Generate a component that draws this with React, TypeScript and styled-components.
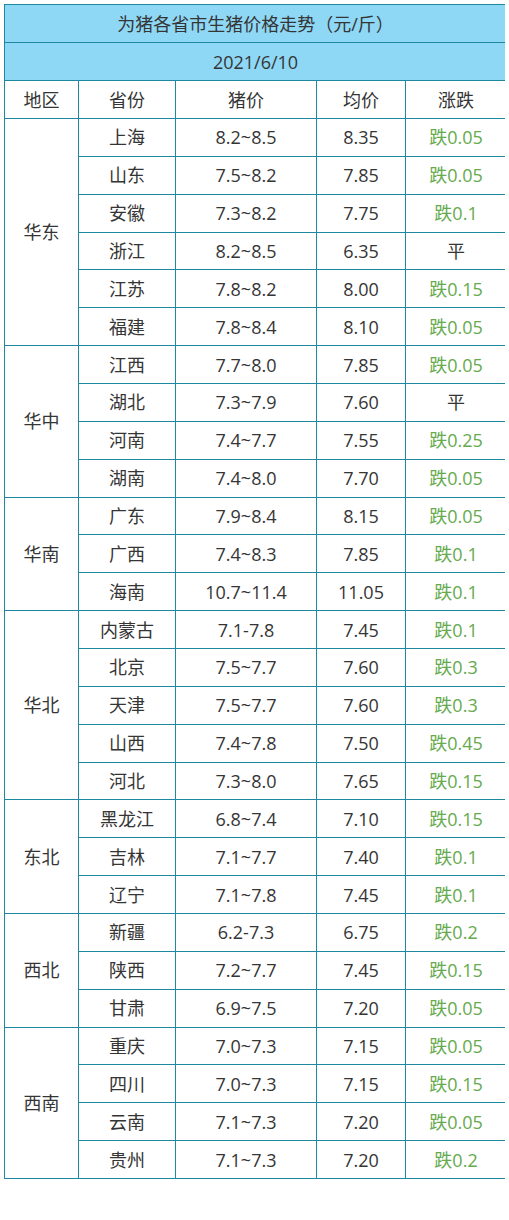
import styled, { createGlobalStyle } from 'styled-components';

const GlobalStyle = createGlobalStyle`
  body {
    margin: 4px;
    background: #ffffff;
    font-family: "Open Sans", "Noto Sans CJK SC", sans-serif;
    color: #333333;
  }
`;

const Table = styled.table`
  width: 502px;
  border-collapse: collapse;
  table-layout: fixed;
  font-size: 18px;
  line-height: 1;
`;

const Cell = styled.td<{ $green?: boolean }>`
  border: 1px solid #1e88a0;
  text-align: center;
  vertical-align: middle;
  padding: 0;
  color: ${(p) => (p.$green ? '#66aa4e' : '#353535')};
`;

const BannerCell = styled(Cell)`
  background: #8ed8f6;
`;

const HeadRow = styled.tr`
  height: 38px;
`;

const Row = styled.tr`
  height: 37.86px;
`;

type Item = [string, string, string, string];

const regions: { name: string; items: Item[] }[] = [
  {
    name: '华东',
    items: [
      ['上海', '8.2~8.5', '8.35', '跌0.05'],
      ['山东', '7.5~8.2', '7.85', '跌0.05'],
      ['安徽', '7.3~8.2', '7.75', '跌0.1'],
      ['浙江', '8.2~8.5', '6.35', '平'],
      ['江苏', '7.8~8.2', '8.00', '跌0.15'],
      ['福建', '7.8~8.4', '8.10', '跌0.05'],
    ],
  },
  {
    name: '华中',
    items: [
      ['江西', '7.7~8.0', '7.85', '跌0.05'],
      ['湖北', '7.3~7.9', '7.60', '平'],
      ['河南', '7.4~7.7', '7.55', '跌0.25'],
      ['湖南', '7.4~8.0', '7.70', '跌0.05'],
    ],
  },
  {
    name: '华南',
    items: [
      ['广东', '7.9~8.4', '8.15', '跌0.05'],
      ['广西', '7.4~8.3', '7.85', '跌0.1'],
      ['海南', '10.7~11.4', '11.05', '跌0.1'],
    ],
  },
  {
    name: '华北',
    items: [
      ['内蒙古', '7.1-7.8', '7.45', '跌0.1'],
      ['北京', '7.5~7.7', '7.60', '跌0.3'],
      ['天津', '7.5~7.7', '7.60', '跌0.3'],
      ['山西', '7.4~7.8', '7.50', '跌0.45'],
      ['河北', '7.3~8.0', '7.65', '跌0.15'],
    ],
  },
  {
    name: '东北',
    items: [
      ['黑龙江', '6.8~7.4', '7.10', '跌0.15'],
      ['吉林', '7.1~7.7', '7.40', '跌0.1'],
      ['辽宁', '7.1~7.8', '7.45', '跌0.1'],
    ],
  },
  {
    name: '西北',
    items: [
      ['新疆', '6.2-7.3', '6.75', '跌0.2'],
      ['陕西', '7.2~7.7', '7.45', '跌0.15'],
      ['甘肃', '6.9~7.5', '7.20', '跌0.05'],
    ],
  },
  {
    name: '西南',
    items: [
      ['重庆', '7.0~7.3', '7.15', '跌0.05'],
      ['四川', '7.0~7.3', '7.15', '跌0.15'],
      ['云南', '7.1~7.3', '7.20', '跌0.05'],
      ['贵州', '7.1~7.3', '7.20', '跌0.2'],
    ],
  },
];

export default function App() {
  return (
    <>
      <GlobalStyle />
      <Table>
        <colgroup>
          <col style={{ width: 74 }} />
          <col style={{ width: 97 }} />
          <col style={{ width: 141 }} />
          <col style={{ width: 89 }} />
          <col style={{ width: 101 }} />
        </colgroup>
        <tbody>
          <HeadRow>
            <BannerCell colSpan={5}>为猪各省市生猪价格走势（元/斤）</BannerCell>
          </HeadRow>
          <HeadRow>
            <BannerCell colSpan={5}>2021/6/10</BannerCell>
          </HeadRow>
          <HeadRow>
            <Cell>地区</Cell>
            <Cell>省份</Cell>
            <Cell>猪价</Cell>
            <Cell>均价</Cell>
            <Cell>涨跌</Cell>
          </HeadRow>
          {regions.map((region) =>
            region.items.map((item, i) => (
              <Row key={item[0]}>
                {i === 0 && <Cell rowSpan={region.items.length}>{region.name}</Cell>}
                <Cell>{item[0]}</Cell>
                <Cell>{item[1]}</Cell>
                <Cell>{item[2]}</Cell>
                <Cell $green={item[3] !== '平'}>{item[3]}</Cell>
              </Row>
            ))
          )}
        </tbody>
      </Table>
    </>
  );
}
